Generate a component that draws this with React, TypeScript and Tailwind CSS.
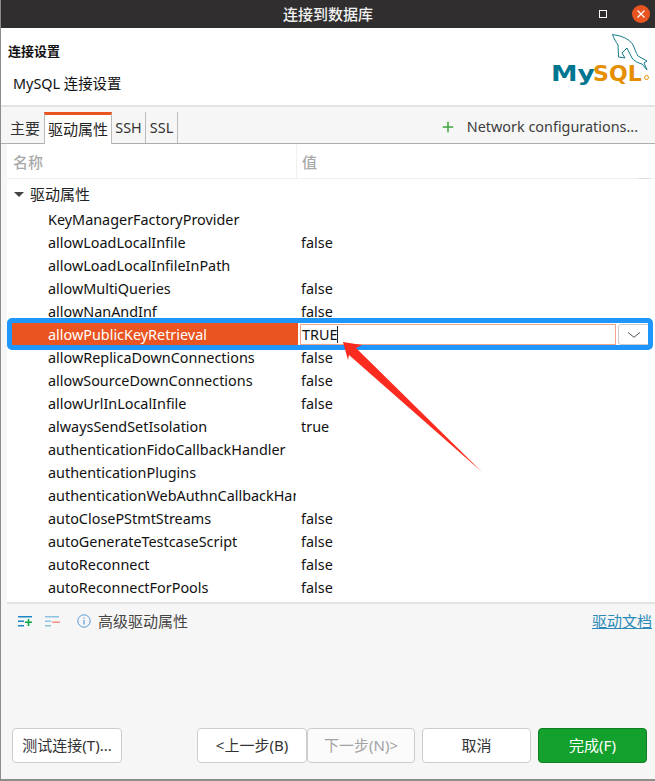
import { ChevronDown, Plus } from 'lucide-react';

const FONT = "font-['Noto_Sans','Noto_Sans_CJK_SC',sans-serif]";

const rows: { name: string; value?: string; active?: boolean }[] = [
  { name: 'KeyManagerFactoryProvider' },
  { name: 'allowLoadLocalInfile', value: 'false' },
  { name: 'allowLoadLocalInfileInPath' },
  { name: 'allowMultiQueries', value: 'false' },
  { name: 'allowNanAndInf', value: 'false' },
  { name: 'allowPublicKeyRetrieval', value: 'TRUE', active: true },
  { name: 'allowReplicaDownConnections', value: 'false' },
  { name: 'allowSourceDownConnections', value: 'false' },
  { name: 'allowUrlInLocalInfile', value: 'false' },
  { name: 'alwaysSendSetIsolation', value: 'true' },
  { name: 'authenticationFidoCallbackHandler' },
  { name: 'authenticationPlugins' },
  { name: 'authenticationWebAuthnCallbackHan' },
  { name: 'autoClosePStmtStreams', value: 'false' },
  { name: 'autoGenerateTestcaseScript', value: 'false' },
  { name: 'autoReconnect', value: 'false' },
  { name: 'autoReconnectForPools', value: 'false' },
];

function MysqlLogo() {
  return (
    <div className="relative w-[100px] h-[70px] shrink-0">
      <svg className="absolute left-[59px] top-[5px]" width="38" height="38" viewBox="0 0 38 38" fill="none" stroke="#137c8b" strokeWidth="1">
        <path d="M0.5 0.5 L8 2 C14 4 19 7 21 11 C23 15 24 19 26 22 L35 27 L32 29 L35 36 L30 30 C26 29 22 27 20 24 C18 21 17 17 15 14 L10 19 L13 24 L6.5 23 L6 11 C4 8 2 5 0.5 0.5 Z" />
      </svg>
      <span className="absolute left-[-2px] top-[33px] origin-left scale-x-[1.27] text-[21px] leading-[24px] font-bold text-[#00758f] font-['DejaVu_Sans',sans-serif]">My</span>
      <span className="absolute left-[40px] top-[33px] origin-left scale-x-[1.05] text-[21px] leading-[24px] font-bold text-[#e48e00] font-['DejaVu_Sans',sans-serif]">SQL</span>
      <span className="absolute left-[91px] top-[46px] w-[5px] h-[5px] rounded-full border border-[#e48e00]" />
    </div>
  );
}

function Row({ name, value, active }: { name: string; value?: string; active?: boolean }) {
  if (active) {
    return (
      <div className="flex h-[23px] items-center">
        <div className="w-[287px] h-[23px] ml-[10px] mr-[2px] bg-[#e95420] text-white pl-[37px] flex items-center shrink-0">{name}</div>
        <div className="flex-1 h-[21px] flex items-center border border-[#eda58c] bg-white pl-[1px] text-[#111]">
          {value}
          <span className="w-px h-[17px] bg-[#222]" />
        </div>
        <div className="w-[32px] h-[21px] ml-[2px] mr-[6px] bg-white border border-[#ccc] rounded-[3px] flex items-center justify-center shrink-0">
          <ChevronDown size={18} strokeWidth={1} className="text-[#333] scale-x-125" />
        </div>
      </div>
    );
  }
  return (
    <div className="flex h-[23px] items-center text-[#111]">
      <div className="w-[295px] pl-[47px] shrink-0 whitespace-nowrap overflow-hidden">{name}</div>
      <div className="pl-[5px]">{value}</div>
    </div>
  );
}

export default function App() {
  return (
    <div className={`${FONT} w-[655px] h-[781px] flex flex-col overflow-hidden bg-[#f6f6f6] text-[14.4px] border-l border-[#8c8c8c] relative`}>
      {/* title bar */}
      <div className="h-[28px] -ml-px bg-[#302e2e] text-[#f2f2f2] flex items-center shrink-0 relative">
        <div className="flex-1 text-center font-medium text-[15px] pl-[57px]">连接到数据库</div>
        <div className="w-[8px] h-[8px] border border-white mr-[25px]" />
        <div className="w-[18px] h-[18px] mr-[5px] rounded-full bg-[#e95420] flex items-center justify-center">
          <svg width="8" height="8" viewBox="0 0 8 8" stroke="#fff" strokeWidth="1.2"><path d="M0.5 0.5 L7.5 7.5 M7.5 0.5 L0.5 7.5" /></svg>
        </div>
      </div>

      {/* header */}
      <div className="h-[79px] bg-white border-b-2 border-[#e3e3e3] flex justify-between shrink-0 pr-[2px] pt-[1px]">
        <div className="pl-[7px] text-[#111]">
          <div className="mt-[12px] leading-[20px] font-semibold text-[13px]">连接设置</div>
          <div className="mt-[13px] ml-[5px] leading-[20px]">MySQL 连接设置</div>
        </div>
        <MysqlLogo />
      </div>

      {/* tabs */}
      <div className="h-[37px] flex items-end shrink-0 pl-[5px] border-b border-[#aeaeae] text-[#333] relative">
        <div className="h-[30px] w-[38px] pl-[4px] flex items-center text-[15px] whitespace-nowrap">主要</div>
        <div className="h-[32px] w-[68px] bg-white border-t-[3px] border-t-[#e95420] border-x border-[#bbb] -mb-px flex items-center justify-center text-[15px] text-[#222] whitespace-nowrap">驱动属性</div>
        <div className="h-[31px] w-[34px] border-r border-[#bbb] flex items-center justify-center">SSH</div>
        <div className="h-[31px] w-[32px] border-r border-[#bbb] flex items-center justify-center">SSL</div>
        <div className="ml-auto h-[32px] flex items-center pr-[17px] text-[#3d3d3d]">
          <Plus size={16} strokeWidth={2.2} className="text-[#3fa33f] mr-[11px]" />
          <span>Network configurations...</span>
        </div>
      </div>

      {/* table */}
      <div className="ml-[6px] bg-white flex-none h-[458px] flex flex-col -mr-px">
        <div className="flex h-[35px] border-b border-[#f0f0f0] text-[#a9a9a9] items-center shrink-0 text-[15px] font-medium">
          <div className="w-[290px] pl-[6px] pt-[2px] h-full flex items-center border-r border-[#f0f0f0]">名称</div>
          <div className="pl-[5px] pt-[2px]">值</div>
          <div className="absolute right-[5px] top-[178px] w-[12px] h-px bg-[#ddd]" />
        </div>
        <div className="flex h-[29px] items-center text-[#222] shrink-0 pl-[7px] pt-[1px] text-[15px]">
          <span className="w-0 h-0 border-x-[5px] border-x-transparent border-t-[5px] border-t-[#444] mr-[6px]" />
          驱动属性
        </div>
        <div className="-ml-[6px]">
          {rows.map(r => <Row key={r.name} {...r} />)}
        </div>
      </div>

      {/* table footer */}
      <div className="ml-[6px] h-[36px] border-t-2 border-[#e3e3e3] flex items-center text-[#444] text-[15px] shrink-0">
        <svg className="ml-[11px]" width="16" height="12" viewBox="0 0 16 12">
          <path d="M0 1h14v1.4H0zM0 5.5h6v1.4H0zM0 10h6v1.4H0z" fill="#1a85c6" />
          <path d="M7 7.2h7M10.5 4v7" stroke="#0da84a" strokeWidth="1.6" />
        </svg>
        <svg className="ml-[11px]" width="16" height="12" viewBox="0 0 16 12">
          <path d="M0 1h14v1.4H0zM0 5.5h6v1.4H0zM0 10h6v1.4H0z" fill="#8dc2e2" />
          <path d="M7 7.2h8" stroke="#f2968d" strokeWidth="1.6" />
        </svg>
        <svg className="ml-[16px]" width="14" height="14" viewBox="0 0 14 14" fill="none">
          <circle cx="7" cy="7" r="6.2" stroke="#5a9bd5" strokeWidth="1" />
          <path d="M7 6v4.5M7 3.4v1.4" stroke="#5a9bd5" strokeWidth="1.2" />
        </svg>
        <span className="ml-[7px]">高级驱动属性</span>
        <span className="ml-auto mr-[3px] text-[#2a8ab8] underline">驱动文档</span>
      </div>

      <div className="flex-1" />

      {/* buttons */}
      <div className="flex items-center h-[35px] mb-[18px] shrink-0 pl-[11px] text-[15px]">
        <button className="w-[110px] h-[35px] bg-white border border-[#cdcdcd] rounded-[4px] text-[#333] whitespace-nowrap">测试连接(T)...</button>
        <button className="ml-[75px] w-[110px] h-[35px] bg-white border border-[#cdcdcd] rounded-[4px] text-[#333]">&lt;上一步(B)</button>
        <button className="w-[108px] h-[35px] bg-[#fbfbfb] border border-[#cdcdcd] rounded-[4px] text-[#a3a3a3]">下一步(N)&gt;</button>
        <button className="ml-[7px] w-[109px] h-[35px] bg-white border border-[#cdcdcd] rounded-[4px] text-[#333]">取消</button>
        <button className="ml-[7px] w-[109px] h-[35px] bg-[#14a02c] border border-[#0f7f22] rounded-[4px] text-white">完成(F)</button>
      </div>
      <div className="h-[2px] bg-[#8c8c8c] -ml-px shrink-0 absolute bottom-0 left-0 right-0" />

      {/* annotation overlay */}
      <div className="absolute left-[6px] top-[318px] w-[646px] h-[32px] border-[5px] border-[#1e96fb] rounded-[5px] pointer-events-none" />
      <svg className="absolute left-[329px] top-[330px] pointer-events-none" width="160" height="145" viewBox="0 0 160 145">
        <path d="M13 12 L32 15 L26 18 L152 142 L19 25 L18 30 Z" fill="#fb2b1f" />
      </svg>
    </div>
  );
}
